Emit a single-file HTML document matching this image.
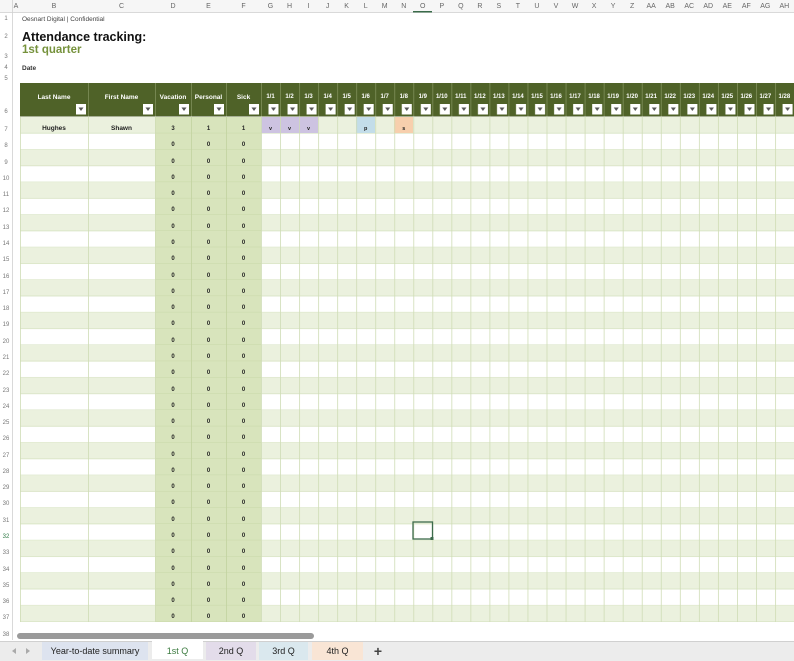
<!DOCTYPE html>
<html><head><meta charset="utf-8"><style>
body{margin:0;width:794px;height:661px;overflow:hidden;background:#fff;font-family:"Liberation Sans",Arial,sans-serif;position:relative}
.a{position:absolute;white-space:nowrap}
svg{position:absolute;left:0;top:0}
.ch{position:absolute;top:0;height:12px;font-size:7px;color:#666;line-height:13px;text-align:center}
.rh{position:absolute;left:0;width:12px;font-size:6px;color:#777;text-align:center}
.hd{position:absolute;top:94px;font-size:6.5px;font-weight:bold;color:#fff;text-align:center}
.num{position:absolute;top:133px;font-size:6px;color:#222;text-align:center;line-height:16.28px;font-weight:bold}
.tab{position:absolute;top:643px;height:17px;line-height:17px;font-size:9px;text-align:center;color:#222}
</style></head><body>
<svg width="794" height="661">
<defs>
<pattern id="rows" x="0" y="117" width="10" height="32.56" patternUnits="userSpaceOnUse">
<rect width="10" height="16.28" fill="#ebf1de"/><rect y="16.28" width="10" height="16.28" fill="#fff"/>
<rect y="15.8" width="10" height="0.8" fill="#d6e2c0"/><rect y="32.1" width="10" height="0.8" fill="#d6e2c0"/></pattern>
<pattern id="rowsD" x="0" y="117" width="10" height="16.28" patternUnits="userSpaceOnUse">
<rect width="10" height="16.28" fill="#d8e4bc"/><rect y="15.8" width="10" height="0.8" fill="#c8d8a8"/></pattern>
<pattern id="vl" x="261" y="0" width="19.04" height="10" patternUnits="userSpaceOnUse">
<rect x="0" width="0.8" height="10" fill="#cfdcb5"/></pattern>
<pattern id="vlh" x="261" y="0" width="19.04" height="10" patternUnits="userSpaceOnUse">
<rect x="0" width="0.8" height="10" fill="#7f8f5a"/></pattern>
<pattern id="btn" x="261" y="104" width="19.04" height="12" patternUnits="userSpaceOnUse">
<rect x="7.5" y="0" width="10" height="10.5" fill="#fff"/><polygon points="10,3.5 15,3.5 12.5,7" fill="#555"/></pattern>
</defs>
<rect x="0" y="0" width="794" height="12" fill="#f6f6f6"/>
<rect x="0" y="12" width="794" height="0.8" fill="#d0d0d0"/>
<rect x="12" y="0" width="0.8" height="640" fill="#d0d0d0"/>
<rect x="413" y="11" width="19" height="1.5" fill="#3a6b4a"/>
<rect x="20" y="83" width="774" height="33.5" fill="#4f6228"/>
<rect x="261" y="83" width="533" height="33.5" fill="url(#vlh)"/>
<rect x="88" y="83" width="0.8" height="33.5" fill="#7f8f5a"/><rect x="155" y="83" width="0.8" height="33.5" fill="#7f8f5a"/><rect x="191" y="83" width="0.8" height="33.5" fill="#7f8f5a"/><rect x="226" y="83" width="0.8" height="33.5" fill="#7f8f5a"/>
<rect x="20" y="117" width="774" height="505" fill="url(#rows)"/>
<rect x="155" y="117" width="106" height="505" fill="url(#rowsD)"/>
<rect x="261" y="117" width="57" height="16" fill="#cdc3e1"/>
<rect x="356" y="117" width="19" height="16" fill="#c3dde9"/>
<rect x="394" y="117" width="19" height="16" fill="#f7cfad"/>
<rect x="261" y="117" width="533" height="505" fill="url(#vl)"/>
<rect x="88" y="117" width="0.8" height="505" fill="#cfdcb5"/><rect x="155" y="117" width="0.8" height="505" fill="#cfdcb5"/><rect x="191" y="117" width="0.8" height="505" fill="#c2d3a0"/><rect x="226" y="117" width="0.8" height="505" fill="#c2d3a0"/><rect x="20" y="117" width="0.8" height="505" fill="#cfdcb5"/>
<rect x="261" y="104" width="533" height="11" fill="url(#btn)"/>
<g fill="#fff"><rect x="76" y="104" width="10" height="10.5"/><rect x="143" y="104" width="10" height="10.5"/><rect x="179" y="104" width="10" height="10.5"/><rect x="214" y="104" width="10" height="10.5"/><rect x="249" y="104" width="10" height="10.5"/></g>
<g fill="#555"><polygon points="78.5,107.5 83.5,107.5 81,111"/><polygon points="145.5,107.5 150.5,107.5 148,111"/><polygon points="181.5,107.5 186.5,107.5 184,111"/><polygon points="216.5,107.5 221.5,107.5 219,111"/><polygon points="251.5,107.5 256.5,107.5 254,111"/></g>
<rect x="413" y="522" width="19.5" height="17" fill="none" stroke="#3d6b4c" stroke-width="1.3"/>
<rect x="430.5" y="537" width="3" height="3" fill="#3d6b4c"/>
<rect x="17" y="633" width="297" height="6" rx="3" fill="#9a9a9a"/>
<rect x="0" y="641" width="794" height="20" fill="#ececec"/>
<rect x="0" y="641" width="794" height="0.8" fill="#c8c8c8"/>
<rect x="42" y="642" width="106" height="18" fill="#dde3ef"/>
<rect x="152" y="641" width="51" height="18" fill="#fff"/>
<rect x="206" y="642" width="50" height="18" fill="#e3dcea"/>
<rect x="259" y="642" width="49" height="18" fill="#dae8ee"/>
<rect x="312" y="642" width="51" height="18" fill="#f9e5d5"/>
<polygon points="16,648 12,651 16,654" fill="#aaa"/><polygon points="26,648 30,651 26,654" fill="#aaa"/>
</svg>
<div class="ch" style="left:12px;width:8px">A</div><div class="ch" style="left:20px;width:68px">B</div><div class="ch" style="left:88px;width:67px">C</div><div class="ch" style="left:155px;width:36px">D</div><div class="ch" style="left:191px;width:35px">E</div><div class="ch" style="left:226px;width:35px">F</div>
<div class="a" style="left:261px;top:0;display:flex;font-size:7px;color:#666;line-height:13px"><span style="width:19.04px;text-align:center">G</span><span style="width:19.04px;text-align:center">H</span><span style="width:19.04px;text-align:center">I</span><span style="width:19.04px;text-align:center">J</span><span style="width:19.04px;text-align:center">K</span><span style="width:19.04px;text-align:center">L</span><span style="width:19.04px;text-align:center">M</span><span style="width:19.04px;text-align:center">N</span><span style="width:19.04px;text-align:center">O</span><span style="width:19.04px;text-align:center">P</span><span style="width:19.04px;text-align:center">Q</span><span style="width:19.04px;text-align:center">R</span><span style="width:19.04px;text-align:center">S</span><span style="width:19.04px;text-align:center">T</span><span style="width:19.04px;text-align:center">U</span><span style="width:19.04px;text-align:center">V</span><span style="width:19.04px;text-align:center">W</span><span style="width:19.04px;text-align:center">X</span><span style="width:19.04px;text-align:center">Y</span><span style="width:19.04px;text-align:center">Z</span><span style="width:19.04px;text-align:center">AA</span><span style="width:19.04px;text-align:center">AB</span><span style="width:19.04px;text-align:center">AC</span><span style="width:19.04px;text-align:center">AD</span><span style="width:19.04px;text-align:center">AE</span><span style="width:19.04px;text-align:center">AF</span><span style="width:19.04px;text-align:center">AG</span><span style="width:19.04px;text-align:center">AH</span></div>
<div class="rh" style="top:16px">1</div><div class="rh" style="top:34px">2</div><div class="rh" style="top:54px">3</div><div class="rh" style="top:65px">4</div><div class="rh" style="top:76px">5</div><div class="rh" style="top:109px">6</div>
<div class="rh" style="top:122px;line-height:16.28px">7<br>8<br>9<br>10<br>11<br>12<br>13<br>14<br>15<br>16<br>17<br>18<br>19<br>20<br>21<br>22<br>23<br>24<br>25<br>26<br>27<br>28<br>29<br>30<br>31<br><span style="color:#2f7a45">32</span><br>33<br>34<br>35<br>36<br>37<br>38</div>
<div class="a" style="left:22px;top:16px;font-size:6.5px;color:#444">Oesnart Digital | Confidential</div>
<div class="a" style="left:22px;top:30px;font-size:12.5px;font-weight:bold;color:#111">Attendance tracking:</div>
<div class="a" style="left:22px;top:44px;font-size:11.5px;font-weight:bold;color:#76923c">1st quarter</div>
<div class="a" style="left:22px;top:65px;font-size:6.5px;font-weight:bold;color:#333">Date</div>
<div class="hd" style="left:20px;width:68px">Last Name</div><div class="hd" style="left:88px;width:67px">First Name</div><div class="hd" style="left:155px;width:36px">Vacation</div><div class="hd" style="left:191px;width:35px">Personal</div><div class="hd" style="left:226px;width:35px">Sick</div>
<div class="a" style="left:261px;top:94px;display:flex;font-size:6px;font-weight:bold;color:#fff"><span style="width:19.04px;text-align:center">1/1</span><span style="width:19.04px;text-align:center">1/2</span><span style="width:19.04px;text-align:center">1/3</span><span style="width:19.04px;text-align:center">1/4</span><span style="width:19.04px;text-align:center">1/5</span><span style="width:19.04px;text-align:center">1/6</span><span style="width:19.04px;text-align:center">1/7</span><span style="width:19.04px;text-align:center">1/8</span><span style="width:19.04px;text-align:center">1/9</span><span style="width:19.04px;text-align:center">1/10</span><span style="width:19.04px;text-align:center">1/11</span><span style="width:19.04px;text-align:center">1/12</span><span style="width:19.04px;text-align:center">1/13</span><span style="width:19.04px;text-align:center">1/14</span><span style="width:19.04px;text-align:center">1/15</span><span style="width:19.04px;text-align:center">1/16</span><span style="width:19.04px;text-align:center">1/17</span><span style="width:19.04px;text-align:center">1/18</span><span style="width:19.04px;text-align:center">1/19</span><span style="width:19.04px;text-align:center">1/20</span><span style="width:19.04px;text-align:center">1/21</span><span style="width:19.04px;text-align:center">1/22</span><span style="width:19.04px;text-align:center">1/23</span><span style="width:19.04px;text-align:center">1/24</span><span style="width:19.04px;text-align:center">1/25</span><span style="width:19.04px;text-align:center">1/26</span><span style="width:19.04px;text-align:center">1/27</span><span style="width:19.04px;text-align:center">1/28</span></div>
<div class="a" style="left:20px;top:125px;width:68px;text-align:center;font-size:6.5px;font-weight:bold;color:#222">Hughes</div>
<div class="a" style="left:88px;top:125px;width:67px;text-align:center;font-size:6.5px;font-weight:bold;color:#222">Shawn</div>
<div class="a" style="left:261px;top:126px;display:flex;font-size:5.5px;font-weight:bold;color:#222"><span style="width:19.04px;text-align:center">v</span><span style="width:19.04px;text-align:center">v</span><span style="width:19.04px;text-align:center">v</span><span style="width:19.04px"></span><span style="width:19.04px"></span><span style="width:19.04px;text-align:center">p</span><span style="width:19.04px"></span><span style="width:19.04px;text-align:center">s</span></div>
<div class="num" style="left:155px;width:36px;top:121px">3<br>0<br>0<br>0<br>0<br>0<br>0<br>0<br>0<br>0<br>0<br>0<br>0<br>0<br>0<br>0<br>0<br>0<br>0<br>0<br>0<br>0<br>0<br>0<br>0<br>0<br>0<br>0<br>0<br>0<br>0</div>
<div class="num" style="left:191px;width:35px;top:121px">1<br>0<br>0<br>0<br>0<br>0<br>0<br>0<br>0<br>0<br>0<br>0<br>0<br>0<br>0<br>0<br>0<br>0<br>0<br>0<br>0<br>0<br>0<br>0<br>0<br>0<br>0<br>0<br>0<br>0<br>0</div>
<div class="num" style="left:226px;width:35px;top:121px">1<br>0<br>0<br>0<br>0<br>0<br>0<br>0<br>0<br>0<br>0<br>0<br>0<br>0<br>0<br>0<br>0<br>0<br>0<br>0<br>0<br>0<br>0<br>0<br>0<br>0<br>0<br>0<br>0<br>0<br>0</div>
<div class="tab" style="left:42px;width:106px">Year-to-date summary</div>
<div class="tab" style="left:152px;width:51px;color:#3b7a3f">1st Q</div>
<div class="tab" style="left:206px;width:50px">2nd Q</div>
<div class="tab" style="left:259px;width:49px">3rd Q</div>
<div class="tab" style="left:312px;width:51px">4th Q</div>
<div class="tab" style="left:370px;width:16px;font-size:14px;font-weight:bold;color:#444">+</div>
</body></html>
